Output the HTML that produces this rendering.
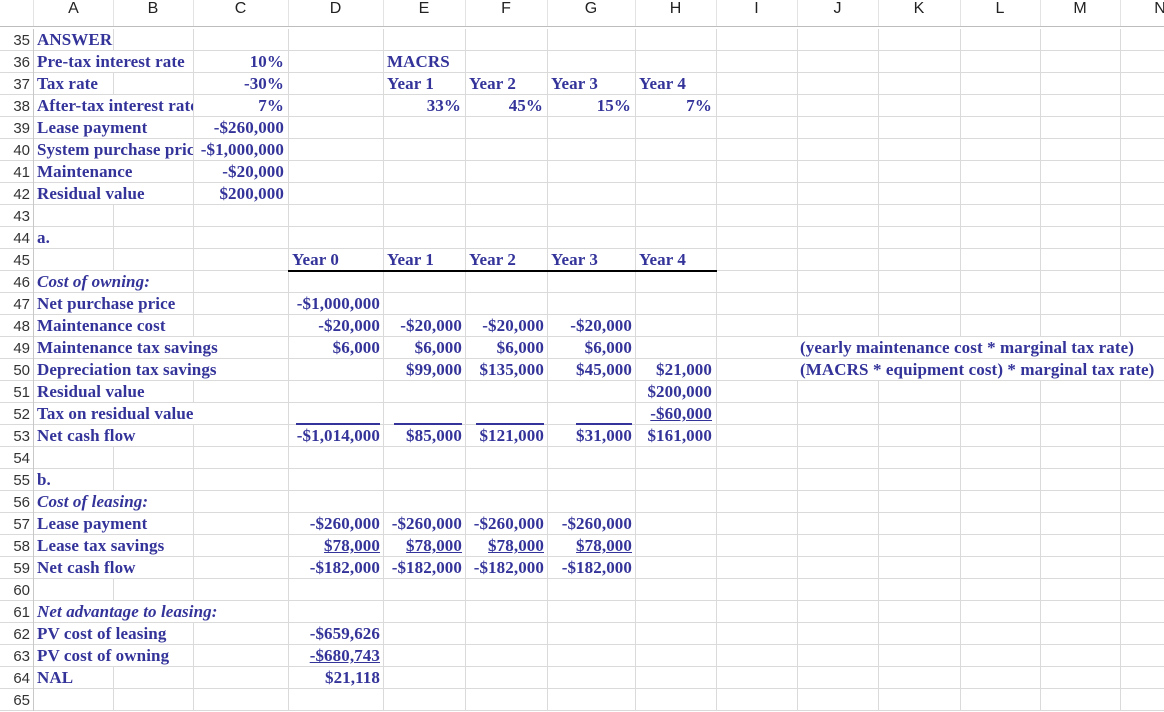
<!DOCTYPE html>
<html><head><meta charset="utf-8"><style>
body{margin:0;width:1164px;height:707px;overflow:hidden;background:#fff;position:relative;font-family:"Liberation Serif",serif;}
.grid{position:absolute;left:0;top:29px;width:1164px;height:682px;background:repeating-linear-gradient(to bottom,transparent 0,transparent 21px,#dadada 21px,#dadada 22px)}
.v{position:absolute;top:29px;height:682px;width:1px;background:#dadada}
.hv{position:absolute;top:0;height:26px;width:1px;background:#e3e3e3}
.h{position:absolute;top:0;height:26px;line-height:26px;text-align:center;font:16px "Liberation Sans",sans-serif;color:#222}
.n{position:absolute;left:0;width:30px;text-align:right;font:15px "Liberation Sans",sans-serif;color:#333;line-height:22px;height:22px}
.t{position:absolute;height:21px;line-height:22px;font-weight:bold;font-size:17px;letter-spacing:0.1px;color:#33339a;white-space:nowrap;background:#fff}
.L{padding-left:3px}
.R{text-align:right;background:transparent}
.i{font-style:italic}.u{text-decoration:underline}
.bl{position:absolute;height:2px;background:#33339a}
</style></head><body>
<div style="position:absolute;left:0;top:26px;width:1164px;height:1px;background:#bdbdbd"></div>
<div class="hv" style="left:33px"></div><div class="hv" style="left:113px"></div><div class="hv" style="left:193px"></div><div class="hv" style="left:288px"></div><div class="hv" style="left:383px"></div><div class="hv" style="left:465px"></div><div class="hv" style="left:547px"></div><div class="hv" style="left:635px"></div><div class="hv" style="left:716px"></div><div class="hv" style="left:797px"></div><div class="hv" style="left:878px"></div><div class="hv" style="left:960px"></div><div class="hv" style="left:1040px"></div><div class="hv" style="left:1120px"></div>
<div class="h" style="left:34px;width:79px">A</div><div class="h" style="left:113px;width:80px">B</div><div class="h" style="left:193px;width:95px">C</div><div class="h" style="left:288px;width:95px">D</div><div class="h" style="left:383px;width:82px">E</div><div class="h" style="left:465px;width:82px">F</div><div class="h" style="left:547px;width:88px">G</div><div class="h" style="left:635px;width:81px">H</div><div class="h" style="left:716px;width:81px">I</div><div class="h" style="left:797px;width:81px">J</div><div class="h" style="left:878px;width:82px">K</div><div class="h" style="left:960px;width:80px">L</div><div class="h" style="left:1040px;width:80px">M</div><div class="h" style="left:1120px;width:80px">N</div>
<div class="grid"></div>
<div class="v" style="left:33px;background:#c8c8c8"></div><div class="v" style="left:113px"></div><div class="v" style="left:193px"></div><div class="v" style="left:288px"></div><div class="v" style="left:383px"></div><div class="v" style="left:465px"></div><div class="v" style="left:547px"></div><div class="v" style="left:635px"></div><div class="v" style="left:716px"></div><div class="v" style="left:797px"></div><div class="v" style="left:878px"></div><div class="v" style="left:960px"></div><div class="v" style="left:1040px"></div><div class="v" style="left:1120px"></div>

<div class="n" style="top:30px">35</div><div class="n" style="top:52px">36</div><div class="n" style="top:74px">37</div><div class="n" style="top:96px">38</div><div class="n" style="top:118px">39</div><div class="n" style="top:140px">40</div><div class="n" style="top:162px">41</div><div class="n" style="top:184px">42</div><div class="n" style="top:206px">43</div><div class="n" style="top:228px">44</div><div class="n" style="top:250px">45</div><div class="n" style="top:272px">46</div><div class="n" style="top:294px">47</div><div class="n" style="top:316px">48</div><div class="n" style="top:338px">49</div><div class="n" style="top:360px">50</div><div class="n" style="top:382px">51</div><div class="n" style="top:404px">52</div><div class="n" style="top:426px">53</div><div class="n" style="top:448px">54</div><div class="n" style="top:470px">55</div><div class="n" style="top:492px">56</div><div class="n" style="top:514px">57</div><div class="n" style="top:536px">58</div><div class="n" style="top:558px">59</div><div class="n" style="top:580px">60</div><div class="n" style="top:602px">61</div><div class="n" style="top:624px">62</div><div class="n" style="top:646px">63</div><div class="n" style="top:668px">64</div><div class="n" style="top:690px">65</div>

<div class="t L" style="left:34px;top:29px">ANSWER</div>
<div class="t L" style="left:34px;top:51px">Pre-tax interest rate</div>
<div class="t L" style="left:34px;top:73px">Tax rate</div>
<div class="t L" style="left:34px;top:95px;width:156px;overflow:hidden">After-tax interest rate</div>
<div class="t L" style="left:34px;top:117px">Lease payment</div>
<div class="t L" style="left:34px;top:139px;width:156px;overflow:hidden">System purchase price</div>
<div class="t L" style="left:34px;top:161px">Maintenance</div>
<div class="t L" style="left:34px;top:183px">Residual value</div>
<div class="t L" style="left:34px;top:227px">a.</div>
<div class="t L i" style="left:34px;top:271px">Cost of owning:</div>
<div class="t L" style="left:34px;top:293px">Net purchase price</div>
<div class="t L" style="left:34px;top:315px">Maintenance cost</div>
<div class="t L" style="left:34px;top:337px">Maintenance tax savings</div>
<div class="t L" style="left:34px;top:359px">Depreciation tax savings</div>
<div class="t L" style="left:34px;top:381px">Residual value</div>
<div class="t L" style="left:34px;top:403px">Tax on residual value</div>
<div class="t L" style="left:34px;top:425px">Net cash flow</div>
<div class="t L" style="left:34px;top:469px">b.</div>
<div class="t L i" style="left:34px;top:491px">Cost of leasing:</div>
<div class="t L" style="left:34px;top:513px">Lease payment</div>
<div class="t L" style="left:34px;top:535px">Lease tax savings</div>
<div class="t L" style="left:34px;top:557px">Net cash flow</div>
<div class="t L i" style="left:34px;top:601px">Net advantage to leasing:</div>
<div class="t L" style="left:34px;top:623px">PV cost of leasing</div>
<div class="t L" style="left:34px;top:645px">PV cost of owning</div>
<div class="t L" style="left:34px;top:667px">NAL</div>

<div class="t R" style="left:193px;width:91px;top:51px">10%</div>
<div class="t R" style="left:193px;width:91px;top:73px">-30%</div>
<div class="t R" style="left:193px;width:91px;top:95px">7%</div>
<div class="t R" style="left:193px;width:91px;top:117px">-$260,000</div>
<div class="t R" style="left:193px;width:91px;top:139px">-$1,000,000</div>
<div class="t R" style="left:193px;width:91px;top:161px">-$20,000</div>
<div class="t R" style="left:193px;width:91px;top:183px">$200,000</div>

<div class="t L" style="left:384px;top:51px">MACRS</div>
<div class="t L" style="left:384px;top:73px">Year 1</div>
<div class="t L" style="left:466px;top:73px">Year 2</div>
<div class="t L" style="left:548px;top:73px">Year 3</div>
<div class="t L" style="left:636px;top:73px">Year 4</div>
<div class="t R" style="left:383px;width:78px;top:95px">33%</div>
<div class="t R" style="left:465px;width:78px;top:95px">45%</div>
<div class="t R" style="left:547px;width:84px;top:95px">15%</div>
<div class="t R" style="left:635px;width:77px;top:95px">7%</div>

<div class="t L" style="left:289px;top:249px">Year 0</div>
<div class="t L" style="left:384px;top:249px">Year 1</div>
<div class="t L" style="left:466px;top:249px">Year 2</div>
<div class="t L" style="left:548px;top:249px">Year 3</div>
<div class="t L" style="left:636px;top:249px">Year 4</div>
<div style="position:absolute;left:288px;top:270px;width:429px;height:2px;background:#000"></div>

<div class="t R" style="left:288px;width:92px;top:293px">-$1,000,000</div>
<div class="t R" style="left:288px;width:92px;top:315px">-$20,000</div>
<div class="t R" style="left:383px;width:79px;top:315px">-$20,000</div>
<div class="t R" style="left:465px;width:79px;top:315px">-$20,000</div>
<div class="t R" style="left:547px;width:85px;top:315px">-$20,000</div>
<div class="t R" style="left:288px;width:92px;top:337px">$6,000</div>
<div class="t R" style="left:383px;width:79px;top:337px">$6,000</div>
<div class="t R" style="left:465px;width:79px;top:337px">$6,000</div>
<div class="t R" style="left:547px;width:85px;top:337px">$6,000</div>
<div class="t L" style="left:797px;top:337px">(yearly maintenance cost * marginal tax rate)</div>
<div class="t R" style="left:383px;width:79px;top:359px">$99,000</div>
<div class="t R" style="left:465px;width:79px;top:359px">$135,000</div>
<div class="t R" style="left:547px;width:85px;top:359px">$45,000</div>
<div class="t R" style="left:635px;width:77px;top:359px">$21,000</div>
<div class="t L" style="left:797px;top:359px">(MACRS * equipment cost) * marginal tax rate)</div>
<div class="t R" style="left:635px;width:77px;top:381px">$200,000</div>
<div class="t R u" style="left:635px;width:77px;top:403px">-$60,000</div>
<div class="bl" style="left:296px;top:423px;width:84px"></div>
<div class="bl" style="left:394px;top:423px;width:68px"></div>
<div class="bl" style="left:476px;top:423px;width:68px"></div>
<div class="bl" style="left:576px;top:423px;width:56px"></div>
<div class="t R" style="left:288px;width:92px;top:425px">-$1,014,000</div>
<div class="t R" style="left:383px;width:79px;top:425px">$85,000</div>
<div class="t R" style="left:465px;width:79px;top:425px">$121,000</div>
<div class="t R" style="left:547px;width:85px;top:425px">$31,000</div>
<div class="t R" style="left:635px;width:77px;top:425px">$161,000</div>

<div class="t R" style="left:288px;width:92px;top:513px">-$260,000</div>
<div class="t R" style="left:383px;width:79px;top:513px">-$260,000</div>
<div class="t R" style="left:465px;width:79px;top:513px">-$260,000</div>
<div class="t R" style="left:547px;width:85px;top:513px">-$260,000</div>
<div class="t R u" style="left:288px;width:92px;top:535px">$78,000</div>
<div class="t R u" style="left:383px;width:79px;top:535px">$78,000</div>
<div class="t R u" style="left:465px;width:79px;top:535px">$78,000</div>
<div class="t R u" style="left:547px;width:85px;top:535px">$78,000</div>
<div class="t R" style="left:288px;width:92px;top:557px">-$182,000</div>
<div class="t R" style="left:383px;width:79px;top:557px">-$182,000</div>
<div class="t R" style="left:465px;width:79px;top:557px">-$182,000</div>
<div class="t R" style="left:547px;width:85px;top:557px">-$182,000</div>

<div class="t R" style="left:288px;width:92px;top:623px">-$659,626</div>
<div class="t R u" style="left:288px;width:92px;top:645px">-$680,743</div>
<div class="t R" style="left:288px;width:92px;top:667px">$21,118</div>
</body></html>
